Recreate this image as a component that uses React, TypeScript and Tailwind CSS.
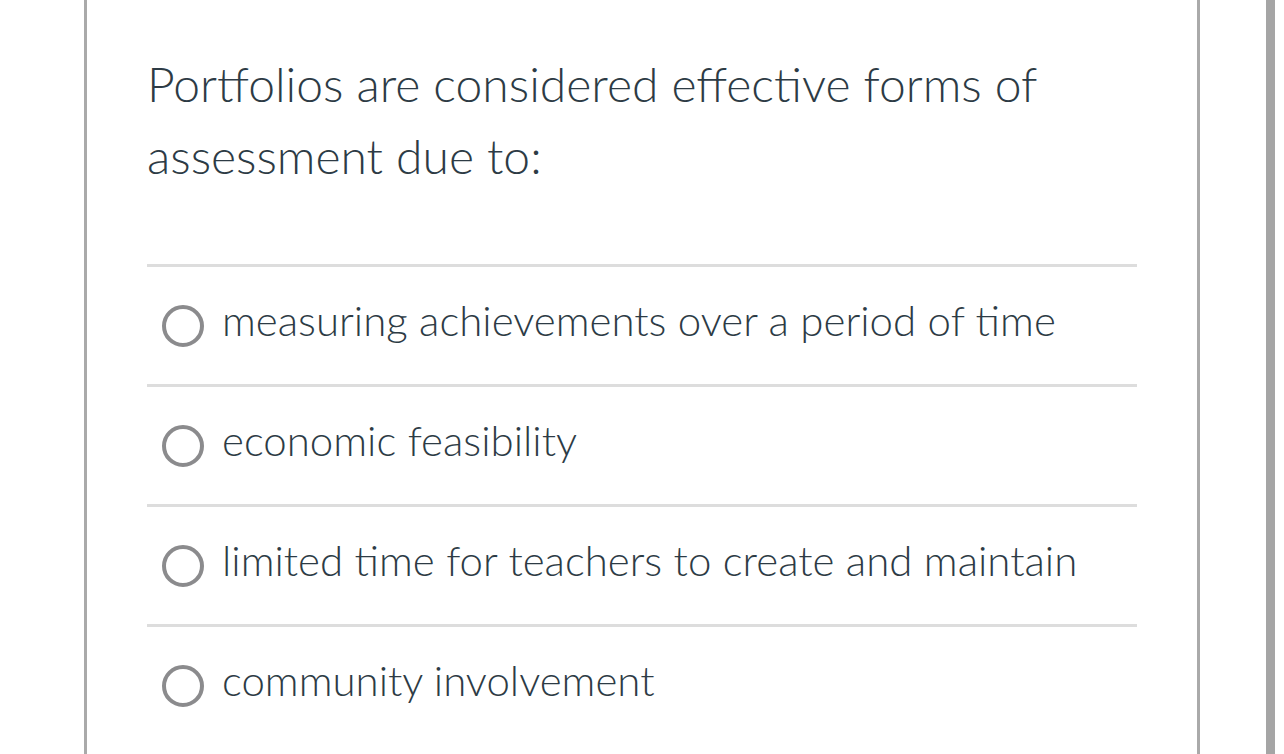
export default function App() {
  const options = [
    "measuring achievements over a period of time",
    "economic feasibility",
    "limited time for teachers to create and maintain",
    "community involvement",
  ];

  return (
    <div className="flex h-[754px] w-[1284px] overflow-hidden bg-white font-['Lato',sans-serif] text-[#2d3b45]">
      <div className="w-[84px] shrink-0" />
      <div className="w-[1116px] shrink-0 border-x-[3px] border-[#aaaaaa] px-[60px] pt-[48px]">
        <div className="text-[48px] font-light leading-[72px]">
          Portfolios are considered effective forms of assessment due to:
        </div>
        <div className="mt-[72px]">
          {options.map((opt) => (
            <div key={opt} className="flex h-[120px] items-center border-t-[3px] border-[#dddddd]">
              <span className="ml-[15px] h-[42px] w-[42px] shrink-0 rounded-full border-[4px] border-[#8b8b8d]" />
              <span className="ml-[18px] pb-[12px] text-[42px] font-light leading-none">{opt}</span>
            </div>
          ))}
        </div>
      </div>
      <div className="w-[66px] shrink-0" />
      <div className="w-[9px] shrink-0 bg-[#a5a5a5]" />
    </div>
  );
}
